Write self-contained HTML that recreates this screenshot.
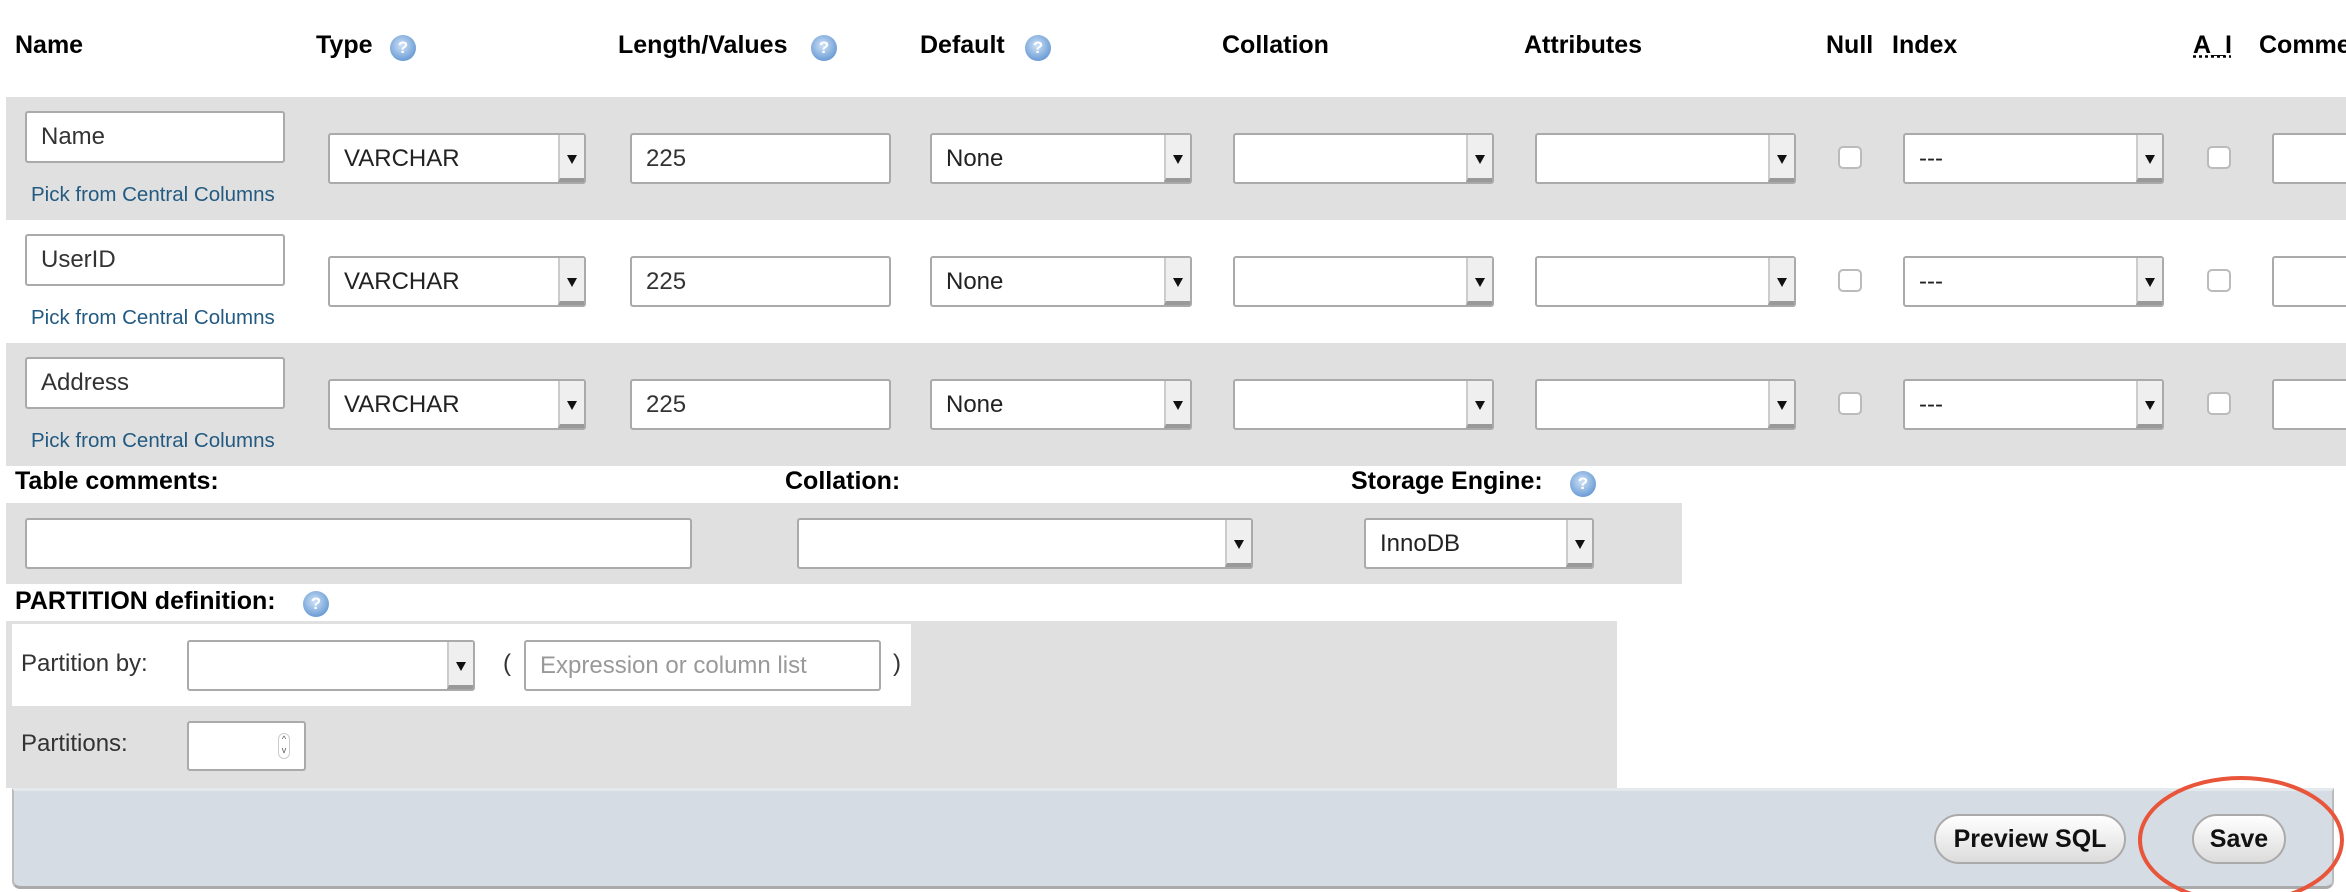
<!DOCTYPE html>
<html><head><meta charset="utf-8"><style>
*{box-sizing:border-box;margin:0;padding:0}
body{width:2346px;height:892px;overflow:hidden;background:#fff;font-family:"Liberation Sans",Arial,sans-serif;position:relative}
.a{position:absolute}
.h{position:absolute;font-weight:bold;font-size:25px;color:#000;top:31px}
.band{position:absolute;background:#e0e0e0}
.inp{position:absolute;background:#fff;border:2px solid #aaa;border-radius:3px;font-size:24px;color:#333;padding-left:14px;display:flex;align-items:center}
.sel{position:absolute;background:#fff;border:2px solid #aaa;border-radius:3px;font-size:24px;color:#222;padding-left:14px;display:flex;align-items:center}
.sel:after{content:"";position:absolute;right:0;top:0;bottom:0;width:24px;background:#efefef;border-left:2px solid #ccc;border-bottom:4px solid #999}
.sel i{position:absolute;right:7px;top:50%;margin-top:-4px;width:0;height:0;border-left:5px solid transparent;border-right:5px solid transparent;border-top:9px solid #111;z-index:2}
.cb{position:absolute;width:24px;height:23px;border:2px solid #bbb;border-radius:5px;background:#fff}
.pick{position:absolute;font-size:20.5px;color:#235a81}
.q{position:absolute;width:26px;height:26px;border-radius:50%;background:radial-gradient(circle at 45% 40%,#cfe2f7,#6f9fd6 70%,#4a7fc0);color:#fff;font-weight:bold;font-size:17px;text-align:center;line-height:26px}
.btn{position:absolute;border:2px solid #aaa;border-radius:25px;background:linear-gradient(#fff,#dcdcdc);font-weight:bold;font-size:25px;display:flex;align-items:center;justify-content:center;color:#111}
</style></head><body>

<div class="h" style="left:15px">Name</div>
<div class="h" style="left:316px">Type</div><div class="q" style="left:390px;top:35px">?</div>
<div class="h" style="left:618px">Length/Values</div><div class="q" style="left:811px;top:35px">?</div>
<div class="h" style="left:920px">Default</div><div class="q" style="left:1025px;top:35px">?</div>
<div class="h" style="left:1222px">Collation</div>
<div class="h" style="left:1524px">Attributes</div>
<div class="h" style="left:1826px">Null</div>
<div class="h" style="left:1892px">Index</div>
<div class="h" style="left:2193px;text-decoration:underline dotted">A_I</div>
<div class="h" style="left:2259px">Comments</div>

<div class="band" style="left:6px;top:97px;width:2340px;height:123px"></div>
<div class="band" style="left:6px;top:343px;width:2340px;height:123px"></div>

<div class="inp" style="left:25px;top:111px;width:260px;height:52px">Name</div>
<div class="pick" style="left:31px;top:183px">Pick from Central Columns</div>
<div class="sel" style="left:328px;top:133px;width:258px;height:51px">VARCHAR<i></i></div>
<div class="inp" style="left:630px;top:133px;width:261px;height:51px">225</div>
<div class="sel" style="left:930px;top:133px;width:262px;height:51px">None<i></i></div>
<div class="sel" style="left:1233px;top:133px;width:261px;height:51px"><i></i></div>
<div class="sel" style="left:1535px;top:133px;width:261px;height:51px"><i></i></div>
<div class="cb" style="left:1838px;top:146px"></div>
<div class="sel" style="left:1903px;top:133px;width:261px;height:51px">---<i></i></div>
<div class="cb" style="left:2207px;top:146px"></div>
<div class="inp" style="left:2272px;top:133px;width:100px;height:51px"></div>

<div class="inp" style="left:25px;top:234px;width:260px;height:52px">UserID</div>
<div class="pick" style="left:31px;top:306px">Pick from Central Columns</div>
<div class="sel" style="left:328px;top:256px;width:258px;height:51px">VARCHAR<i></i></div>
<div class="inp" style="left:630px;top:256px;width:261px;height:51px">225</div>
<div class="sel" style="left:930px;top:256px;width:262px;height:51px">None<i></i></div>
<div class="sel" style="left:1233px;top:256px;width:261px;height:51px"><i></i></div>
<div class="sel" style="left:1535px;top:256px;width:261px;height:51px"><i></i></div>
<div class="cb" style="left:1838px;top:269px"></div>
<div class="sel" style="left:1903px;top:256px;width:261px;height:51px">---<i></i></div>
<div class="cb" style="left:2207px;top:269px"></div>
<div class="inp" style="left:2272px;top:256px;width:100px;height:51px"></div>

<div class="inp" style="left:25px;top:357px;width:260px;height:52px">Address</div>
<div class="pick" style="left:31px;top:429px">Pick from Central Columns</div>
<div class="sel" style="left:328px;top:379px;width:258px;height:51px">VARCHAR<i></i></div>
<div class="inp" style="left:630px;top:379px;width:261px;height:51px">225</div>
<div class="sel" style="left:930px;top:379px;width:262px;height:51px">None<i></i></div>
<div class="sel" style="left:1233px;top:379px;width:261px;height:51px"><i></i></div>
<div class="sel" style="left:1535px;top:379px;width:261px;height:51px"><i></i></div>
<div class="cb" style="left:1838px;top:392px"></div>
<div class="sel" style="left:1903px;top:379px;width:261px;height:51px">---<i></i></div>
<div class="cb" style="left:2207px;top:392px"></div>
<div class="inp" style="left:2272px;top:379px;width:100px;height:51px"></div>

<div class="h" style="left:15px;top:467px">Table comments:</div>
<div class="h" style="left:785px;top:467px">Collation:</div>
<div class="h" style="left:1351px;top:467px">Storage Engine:</div><div class="q" style="left:1570px;top:471px">?</div>
<div class="band" style="left:6px;top:503px;width:1676px;height:81px"></div>
<div class="inp" style="left:25px;top:518px;width:667px;height:51px"></div>
<div class="sel" style="left:797px;top:518px;width:456px;height:51px"><i></i></div>
<div class="sel" style="left:1364px;top:518px;width:230px;height:51px">InnoDB<i></i></div>

<div class="h" style="left:15px;top:587px">PARTITION definition:</div><div class="q" style="left:303px;top:591px">?</div>
<div class="band" style="left:6px;top:621px;width:1611px;height:167px"></div>
<div class="a" style="left:12px;top:624px;width:899px;height:82px;background:#fff"></div>
<div class="a" style="left:21px;top:650px;font-size:24px;color:#333">Partition by:</div>
<div class="sel" style="left:187px;top:640px;width:288px;height:51px"><i></i></div>
<div class="a" style="left:503px;top:650px;font-size:24px;color:#333">(</div>
<div class="inp" style="left:524px;top:640px;width:357px;height:51px;color:#999">Expression or column list</div>
<div class="a" style="left:893px;top:650px;font-size:24px;color:#333">)</div>
<div class="a" style="left:21px;top:730px;font-size:24px;color:#333">Partitions:</div>
<div class="inp" style="left:187px;top:721px;width:119px;height:50px"></div>
<div class="a" style="left:278px;top:733px;width:12px;height:26px;border:1px solid #ccc;border-radius:6px;font-size:9px;line-height:11px;text-align:center;color:#555">^<br>v</div>

<div class="a" style="left:12px;top:788px;width:2322px;height:101px;background:#d5dce3;border-left:2px solid #bbb;border-right:2px solid #bbb;border-bottom:3px solid #aaa;border-radius:0 0 8px 8px;border-top:3px solid #e4e9ee"></div>
<div class="btn" style="left:1934px;top:814px;width:192px;height:50px">Preview SQL</div>
<div class="btn" style="left:2192px;top:814px;width:94px;height:50px">Save</div>
<svg class="a" style="left:0;top:0" width="2346" height="892"><ellipse cx="2241" cy="840" rx="101" ry="62" fill="none" stroke="#e8553a" stroke-width="4"/></svg>
</body></html>
